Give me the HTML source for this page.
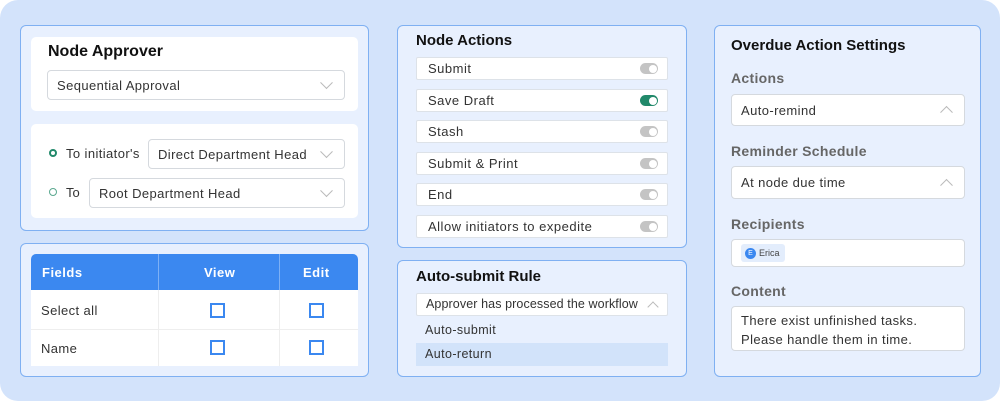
<!DOCTYPE html>
<html><head><style>
*{box-sizing:border-box;margin:0;padding:0}
body{width:1000px;height:401px;background:#fff;font-family:"Liberation Sans",sans-serif;position:relative;overflow:hidden;color:#333}
.bg{position:absolute;left:0;top:0;width:1000px;height:401px;background:#d3e3fb;border-radius:18px}
.p{position:absolute;background:#e8f0fe;border:1.5px solid #7fb0f2;border-radius:6px}
.a{position:absolute}
.card{position:absolute;background:#fff;border-radius:5px}
.sel{position:absolute;background:#fff;border:1px solid #d5d9de;border-radius:4px;font-size:13px;color:#333;padding-left:9px;display:flex;align-items:center;letter-spacing:0.4px}
.t{position:absolute;font-weight:bold;font-size:16px;color:#111}
.chev{position:absolute;right:13px;top:50%;width:9px;height:9px;border-right:1.6px solid #bbb;border-bottom:1.6px solid #bbb;transform:translateY(-75%) rotate(45deg)}
.up{transform:translateY(-25%) rotate(-135deg)}
.row{position:absolute;left:416px;width:252px;height:23px;background:#fff;border:1px solid #dde2e8;border-radius:2px;font-size:13px;padding-left:11px;line-height:21px;letter-spacing:0.5px}
.tg{position:absolute;right:9px;top:5px;width:18px;height:11px;border-radius:6px;background:#c4c4c4}
.tg:after{content:"";position:absolute;right:1.5px;top:1.5px;width:8px;height:8px;border-radius:50%;background:#fff}
.tg.on{background:#21896a}
.lab{position:absolute;left:731px;font-size:14px;font-weight:bold;color:#666;letter-spacing:0.3px}
.cb{position:absolute;width:15px;height:15px;border:2px solid #3b88f0}
</style></head><body>
<div class="bg"></div>

<div class="p" style="left:20px;top:25px;width:349px;height:206px"></div>
<div class="card" style="left:31px;top:37px;width:327px;height:74px"></div>
<div class="t" style="left:48px;top:43px">Node Approver</div>
<div class="sel" style="left:47px;top:70px;width:298px;height:30px">Sequential Approval<span class="chev"></span></div>
<div class="card" style="left:31px;top:124px;width:327px;height:94px"></div>
<div class="a" style="left:49px;top:149px;width:8px;height:8px;border-radius:50%;border:2.5px solid #21896a"></div>
<div class="a" style="left:66px;top:146px;font-size:13px;letter-spacing:0.4px">To initiator's</div>
<div class="sel" style="left:148px;top:139px;width:197px;height:30px">Direct Department Head<span class="chev"></span></div>
<div class="a" style="left:49px;top:188px;width:8px;height:8px;border-radius:50%;border:1px solid #5aa88f"></div>
<div class="a" style="left:66px;top:185px;font-size:13px">To</div>
<div class="sel" style="left:89px;top:178px;width:256px;height:30px">Root Department Head<span class="chev"></span></div>

<div class="p" style="left:20px;top:243px;width:349px;height:134px"></div>
<div class="a" style="left:31px;top:254px;width:327px;height:112px;background:#fff;border-radius:5px 5px 0 0;overflow:hidden">
 <div class="a" style="left:0;top:0;width:327px;height:36px;background:#3b88f0"></div>
 <div class="a" style="left:127px;top:0;width:1px;height:112px;background:#eee"></div>
 <div class="a" style="left:248px;top:0;width:1px;height:112px;background:#eee"></div>
 <div class="a" style="left:127px;top:0;width:1px;height:36px;background:#7db0f5"></div>
 <div class="a" style="left:248px;top:0;width:1px;height:36px;background:#7db0f5"></div>
 <div class="a" style="left:0;top:75px;width:327px;height:1px;background:#eee"></div>
 <div class="a" style="left:11px;top:11px;color:#fff;font-weight:bold;font-size:13px;letter-spacing:0.5px">Fields</div>
 <div class="a" style="left:173px;top:11px;color:#fff;font-weight:bold;font-size:13px;letter-spacing:0.5px">View</div>
 <div class="a" style="left:272px;top:11px;color:#fff;font-weight:bold;font-size:13px;letter-spacing:0.5px">Edit</div>
 <div class="a" style="left:10px;top:49px;font-size:13px;letter-spacing:0.4px">Select all</div>
 <div class="a" style="left:10px;top:87px;font-size:13px;letter-spacing:0.4px">Name</div>
 <div class="cb" style="left:179px;top:49px"></div><div class="cb" style="left:278px;top:49px"></div>
 <div class="cb" style="left:179px;top:86px"></div><div class="cb" style="left:278px;top:86px"></div>
</div>

<div class="p" style="left:397px;top:25px;width:290px;height:223px"></div>
<div class="t" style="left:416px;top:32px;font-size:15px">Node Actions</div>
<div class="row" style="top:57px">Submit<span class="tg"></span></div>
<div class="row" style="top:89px">Save Draft<span class="tg on"></span></div>
<div class="row" style="top:120px">Stash<span class="tg"></span></div>
<div class="row" style="top:152px">Submit &amp; Print<span class="tg"></span></div>
<div class="row" style="top:183px">End<span class="tg"></span></div>
<div class="row" style="top:215px">Allow initiators to expedite<span class="tg"></span></div>

<div class="p" style="left:397px;top:260px;width:290px;height:117px"></div>
<div class="t" style="left:416px;top:268px;font-size:15px">Auto-submit Rule</div>
<div class="row" style="top:293px;padding-left:9px;font-size:12.5px;letter-spacing:0.1px">Approver has processed the workflow<span class="chev up" style="right:10px;width:8px;height:8px"></span></div>
<div class="a" style="left:425px;top:323px;font-size:12.5px;letter-spacing:0.4px">Auto-submit</div>
<div class="a" style="left:416px;top:343px;width:252px;height:23px;background:#d2e3fa"></div>
<div class="a" style="left:425px;top:347px;font-size:12.5px;letter-spacing:0.4px">Auto-return</div>

<div class="p" style="left:714px;top:25px;width:267px;height:352px"></div>
<div class="t" style="left:731px;top:37px;font-size:15px">Overdue Action Settings</div>
<div class="lab" style="top:70px">Actions</div>
<div class="sel" style="left:731px;top:94px;width:234px;height:32px">Auto-remind<span class="chev up"></span></div>
<div class="lab" style="top:143px">Reminder Schedule</div>
<div class="sel" style="left:731px;top:166px;width:234px;height:33px">At node due time<span class="chev up"></span></div>
<div class="lab" style="top:216px">Recipients</div>
<div class="sel" style="left:731px;top:239px;width:234px;height:28px;padding-left:9px"><span style="display:flex;align-items:center;background:#e3edfc;border-radius:3px;height:18px;padding:0 5px 0 4px;font-size:9px;color:#444;letter-spacing:0"><span style="width:11px;height:11px;border-radius:50%;background:#3b88f0;color:#fff;font-size:7px;text-align:center;line-height:11px;margin-right:3px">E</span>Erica</span></div>
<div class="lab" style="top:283px">Content</div>
<div class="sel" style="left:731px;top:306px;width:234px;height:45px;display:block;padding-top:4px;line-height:19px">There exist unfinished tasks.<br>Please handle them in time.</div>
</body></html>
